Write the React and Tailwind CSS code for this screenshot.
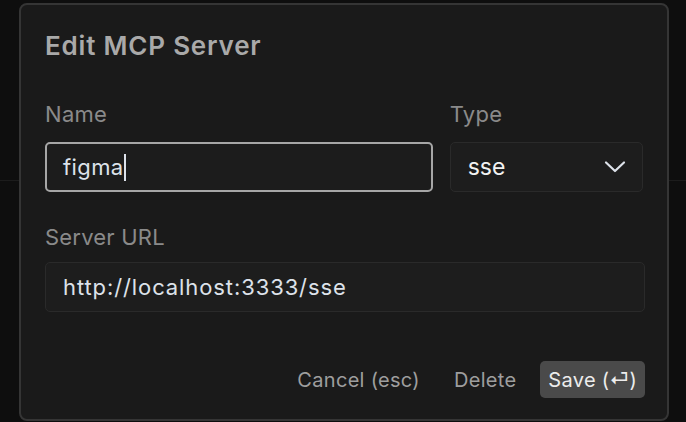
import React from "react";

export default function App() {
  return (
    <div className="relative w-[686px] h-[422px] overflow-hidden bg-[#0e0e0e]" style={{ fontFamily: "Inter, 'Noto Sans', sans-serif" }}>
      <div className="h-[181px] border-b border-[#1c1c1c]" />
      <div className="absolute left-[19px] top-[3px] w-[650px] h-[418px] rounded-[8px] border-2 border-[#353535] bg-[#1a1a1a] px-[24px] pt-[25px] flex flex-col">
        <h2 className="text-[26px] leading-[32px] font-semibold text-[#a9a9a9] tracking-[0.8px]">Edit MCP Server</h2>
        <div className="mt-[38px] flex gap-[17px]">
          <div className="flex flex-col w-[389px]">
            <label className="text-[22px] leading-[28px] text-[#8a8a8a] tracking-[0.3px]">Name</label>
            <div className="mt-[14px] h-[50px] rounded-[5px] border-2 border-[#a6a6a6] bg-[#1c1c1c] flex items-center px-[16px]">
              <span className="text-[22px] text-[#dde2ea] tracking-[0.4px]">figma</span>
              <span className="w-[2px] h-[27px] bg-[#dde2ea]" />
            </div>
          </div>
          <div className="flex flex-col w-[194px]">
            <label className="text-[22px] leading-[28px] text-[#8a8a8a] tracking-[0.3px]">Type</label>
            <div className="mt-[14px] h-[50px] rounded-[5px] border border-[#2a2a2a] bg-[#1d1d1d] flex items-center justify-between pl-[17px] pr-[16px]">
              <span className="text-[23px] text-[#f2f2f2]">sse</span>
              <svg width="22" height="14" viewBox="0 0 22 14" fill="none">
                <path d="M2 2.5 L11 11 L20 2.5" stroke="#dde2ea" strokeWidth="2.2" strokeLinecap="round" strokeLinejoin="round" />
              </svg>
            </div>
          </div>
        </div>
        <label className="mt-[31px] text-[22px] leading-[28px] text-[#8a8a8a] tracking-[0.2px]">Server URL</label>
        <div className="mt-[11px] w-[600px] h-[50px] rounded-[5px] border border-[#2a2a2a] bg-[#1d1d1d] flex items-center px-[17px]">
          <span className="text-[22px] text-[#dde2ea] tracking-[0.9px]">http://localhost:3333/sse</span>
        </div>
        <div className="mt-[49px] w-[600px] flex items-center justify-end">
          <button className="h-[37px] text-[20px] text-[#9e9e9e] tracking-[0.3px]">Cancel (esc)</button>
          <button className="ml-[34px] h-[37px] text-[20px] text-[#9e9e9e] tracking-[0.3px]">Delete</button>
          <button className="ml-[24px] px-[8px] h-[37px] rounded-[5px] bg-[#4a4a4a] text-[20px] text-[#ececec] tracking-[0.3px]">Save (⏎)</button>
        </div>
      </div>
    </div>
  );
}
